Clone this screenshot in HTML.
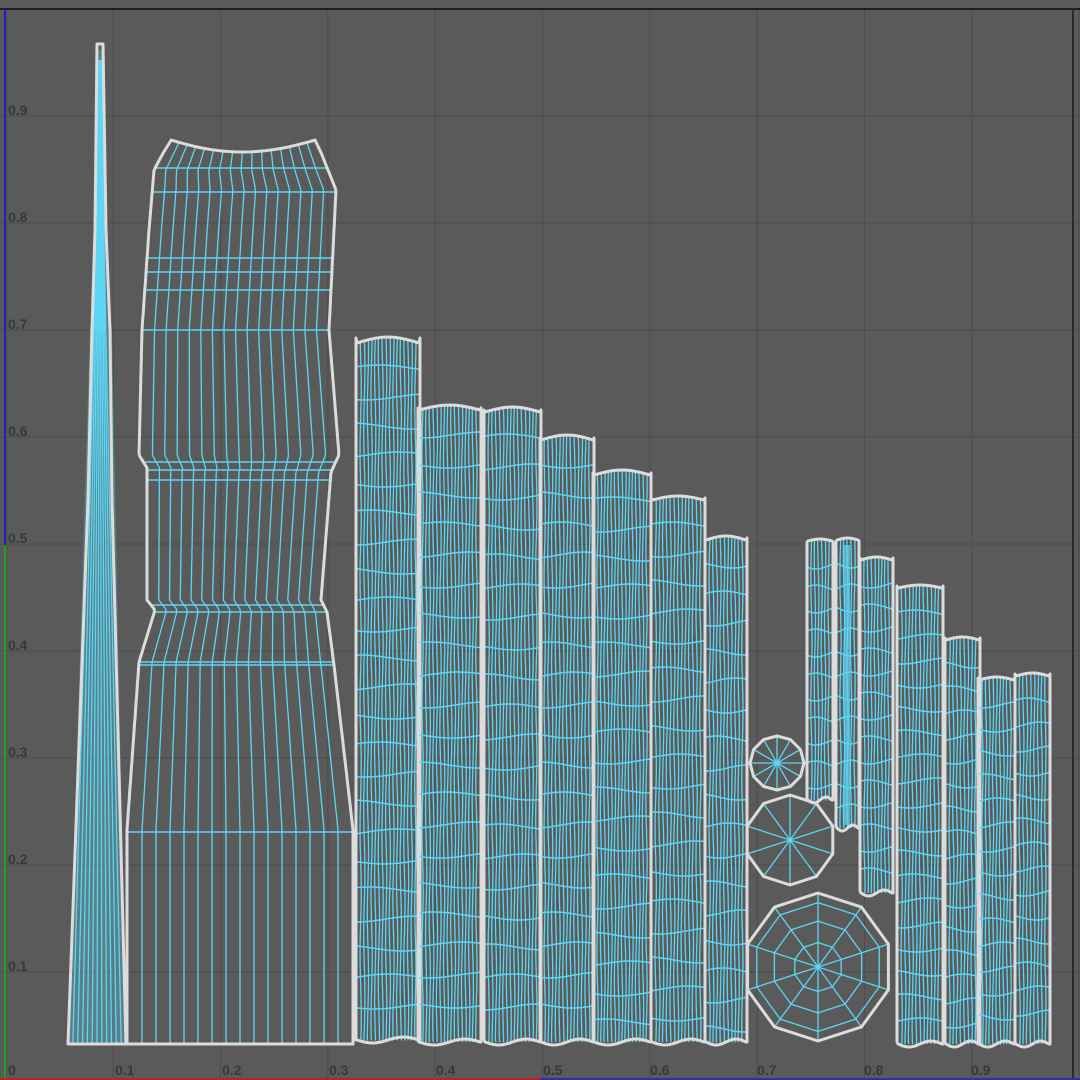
<!DOCTYPE html>
<html><head><meta charset="utf-8"><style>
html,body{margin:0;padding:0;background:#5a5a5a;overflow:hidden}
svg{display:block}
text{font-family:"Liberation Sans",sans-serif;font-size:14px;font-weight:bold;fill:#383838}
</style></head><body>
<svg id="s" width="1080" height="1080" xmlns="http://www.w3.org/2000/svg">
<rect width="1080" height="1080" fill="#5a5a5a"/>
<g id="grid" stroke="#4c4c4c" stroke-width="1"></g>
<g id="labels">
<text x="8" y="115">0.9</text><text x="8" y="222">0.8</text><text x="8" y="329">0.7</text>
<text x="8" y="436">0.6</text><text x="8" y="543">0.5</text><text x="8" y="650">0.4</text>
<text x="8" y="757">0.3</text><text x="8" y="864">0.2</text><text x="8" y="971">0.1</text>
<text x="8" y="1075">0</text>
<text x="115" y="1075">0.1</text><text x="222" y="1075">0.2</text><text x="329" y="1075">0.3</text>
<text x="436" y="1075">0.4</text><text x="543" y="1075">0.5</text><text x="650" y="1075">0.6</text>
<text x="757" y="1075">0.7</text><text x="864" y="1075">0.8</text><text x="971" y="1075">0.9</text>
</g>
<g id="m" fill="none" stroke-linejoin="round"></g>
<line x1="0" y1="9" x2="1080" y2="9" stroke="#1e1e1e" stroke-width="2"/>
<line x1="1073" y1="9" x2="1073" y2="1080" stroke="#2a2a2a" stroke-width="2"/>
<line x1="5" y1="9" x2="5" y2="545" stroke="#2020c0" stroke-width="2"/>
<line x1="5" y1="545" x2="5" y2="1080" stroke="#20a020" stroke-width="2"/>
<line x1="0" y1="1079" x2="540" y2="1079" stroke="#c02020" stroke-width="2"/>
<line x1="540" y1="1079" x2="1080" y2="1079" stroke="#3030a0" stroke-width="2"/>
</svg>
<script>
var g=document.getElementById('grid'),m=document.getElementById('m');
var h='';
for(var i=0;i<=10;i++){var x=6+i*107.3;h+='<line x1="'+x+'" y1="9" x2="'+x+'" y2="1080"/>';var y=1079-i*107;h+='<line x1="0" y1="'+y+'" x2="1080" y2="'+y+'"/>';}
g.innerHTML=h;
var C='#5cd6f4',W='#dcdcdc',out='';
function pl(pts,col,w,close){return '<'+(close?'polygon':'polyline')+' points="'+pts.map(function(p){return p[0].toFixed(1)+','+p[1].toFixed(1)}).join(' ')+'" stroke="'+col+'" stroke-width="'+w+'"/>';}
function interp(prof,y){for(var i=0;i<prof.length-1;i++){if(y>=prof[i][0]&&y<=prof[i+1][0]){var t=(y-prof[i][0])/(prof[i+1][0]-prof[i][0]);return prof[i][1]+t*(prof[i+1][1]-prof[i][1]);}}return y<prof[0][0]?prof[0][1]:prof[prof.length-1][1];}
function shape(L,R,top,bot,ncol,rows,topDip,wave,fill){
  var s='';
  function topY(t){return top+topDip*Math.sin(Math.PI*t);}
  var ys=[];for(var y=top-5;y<=bot;y+=3)ys.push(y);
  for(var c=1;c<ncol;c++){var t=c/ncol,pts=[];
    var ty=topY(t);
    for(var k=0;k<ys.length;k++){var y=Math.max(ys[k],ty);var xl=interp(L,y),xr=interp(R,y);pts.push([xl+t*(xr-xl)+(wave?Math.sin(y*0.05+c)*0.6:0),y]);}
    pts.push([interp(L,bot)+t*(interp(R,bot)-interp(L,bot)),bot]);
    s+=pl(pts,C,1.3);}
  rows.forEach(function(ry){var pts=[];for(var j=0;j<=20;j++){var t=j/20;var y=ry+(wave?wave*Math.sin(Math.PI*t+ry):0);var xl=interp(L,y),xr=interp(R,y);pts.push([xl+t*(xr-xl),y]);}s+=pl(pts,C,1.5);});
  var o=[];for(var j=0;j<=20;j++){var t=j/20;var y=topY(t);o.push([interp(L,y)+t*(interp(R,y)-interp(L,y)),y]);}
  for(var k=0;k<ys.length;k++)if(ys[k]>top+topDip)o.push([interp(R,ys[k])+1,ys[k]]);
  o.push([interp(R,bot)+1,bot]);
  for(var j=20;j>=0;j--){var t=j/20;o.push([interp(L,bot)+t*(interp(R,bot)-interp(L,bot)),bot+(wave?3*Math.sin(t*Math.PI*2):0)]);}
  for(var k=ys.length-1;k>=0;k--)if(ys[k]>top+topDip)o.push([interp(L,ys[k])-1,ys[k]]);
  s+=pl(o,W,3,true);
  return s;
}
(function(){var s='',n=12;for(var c=1;c<n;c++){var t=c/n;s+=pl([[100,60],[68+t*58,1044]],C,1.3);}
s+='<polygon points="97,50 103,50 108,300 112,330 126,1044 68,1044 90,330 94,300" fill="'+C+'" fill-opacity="0.3" stroke="none"/>';
s+='<polygon points="98,60 102,60 106,330 94,330" fill="'+C+'"/>';
s+=pl([[97,44],[103,44],[106,230],[110,330],[112,500],[126,1044],[68,1044],[88,500],[92,330],[95,230]],W,3,true);out+=s;})();
var BL=[[133,175],[170,155],[230,150],[330,143],[455,140],[468,148],[600,148],[610,156],[662,140],[830,128],[1044,128]];
var BR=[[140,315],[190,335],[330,328],[455,338],[472,330],[600,320],[612,326],[665,333],[830,352],[1044,352]];
out+=shape(BL,BR,140,1044,16,[168,192,258,272,290,330,462,470,480,605,612,662,665,832],12,0,false);
function strip(x0,x1,top,bot,dip,step){var n=Math.round((x1-x0)/3.6),rows=[];for(var y=top+25;y<bot-10;y+=step)rows.push(y);
 out+=shape([[0,x0],[2000,x0]],[[0,x1],[2000,x1]],top,bot,n,rows,dip,3,true);}
strip(357,419,343,1040,-6,29);
strip(419,480,410,1042,-5,30);
strip(485,540,412,1042,-5,30);
strip(541,593,440,1042,-5,30);
strip(594,650,475,1042,-5,29);
strip(652,704,500,1042,-4,29);
strip(706,746,540,1042,-4,29);
strip(808,832,541,800,-2,22);
strip(837,858,540,828,-2,22);
strip(861,892,560,893,-3,22);
strip(898,942,588,1044,-3,24);
strip(946,979,640,1044,-3,24);
strip(979,1014,680,1044,-3,24);
strip(1016,1049,676,1044,-3,24);
out+='<rect x="844" y="545" width="6" height="280" fill="'+C+'" opacity="0.7"/>';
function poly(cx,cy,r,n,rings){var s='',o=[];for(var i=0;i<n;i++){var a=-Math.PI/2+i*2*Math.PI/n;o.push([cx+r*Math.cos(a),cy+r*Math.sin(a)]);s+=pl([[cx,cy],[cx+r*Math.cos(a),cy+r*Math.sin(a)]],C,1.3);}
 rings.forEach(function(f){var p=o.map(function(q){return [cx+(q[0]-cx)*f,cy+(q[1]-cy)*f]});s+=pl(p,C,1.3,true);});
 s+=pl(o,W,3,true);s+='<circle cx="'+cx+'" cy="'+cy+'" r="2.5" fill="'+C+'"/>';return s;}
out+=poly(777,763,27,12,[]);
out+=poly(790,840,45,10,[]);
out+=poly(818,967,74,10,[0.33,0.62,0.87]);
m.innerHTML=out;
</script>
</body></html>
